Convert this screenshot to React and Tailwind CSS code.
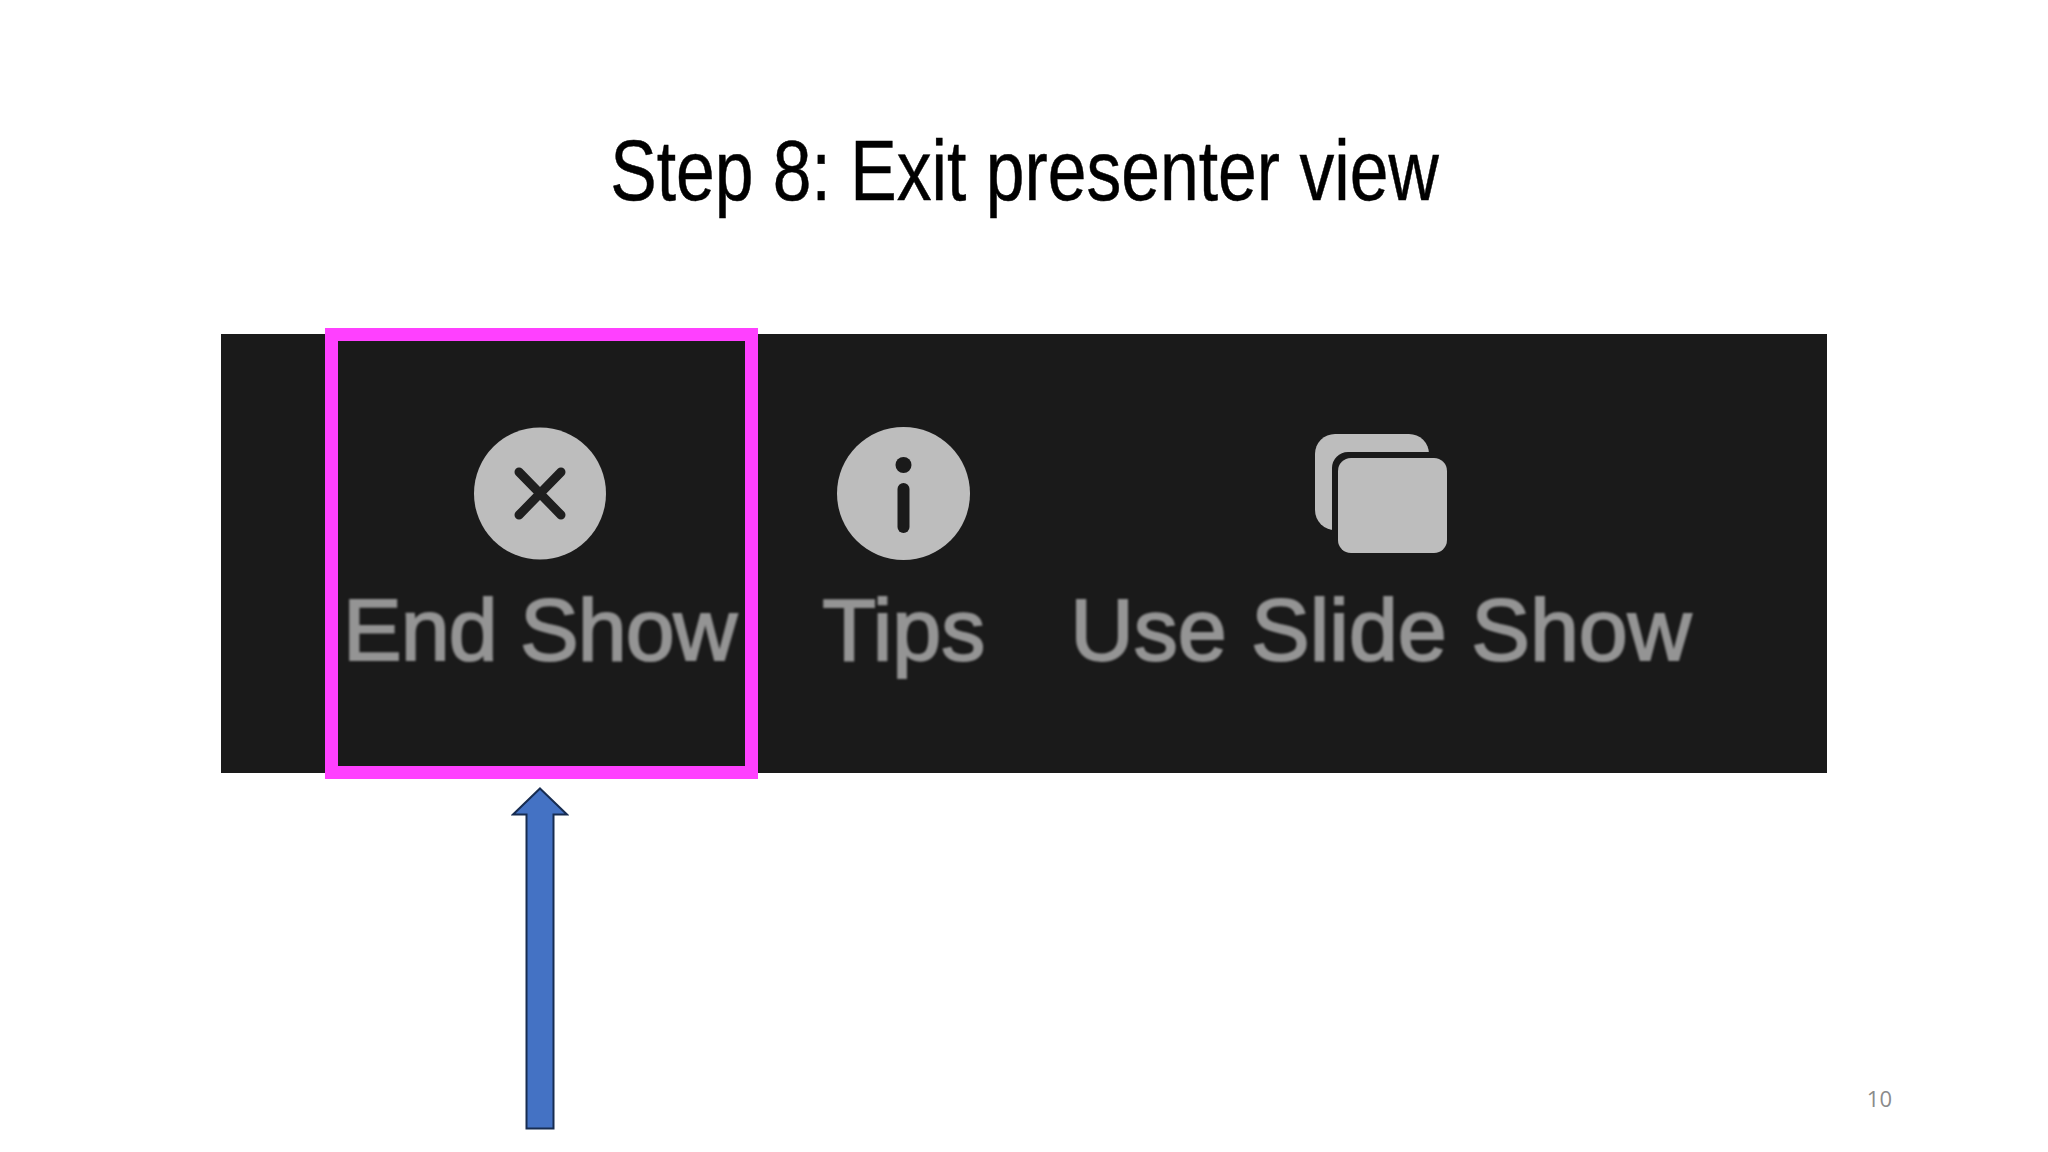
function CloseIcon() {
    return (
        <svg width="132" height="133" viewBox="0 0 132 133">
            <circle cx="66" cy="66.5" r="66" fill="#bdbdbd" />
            <path d="M45 45 L87 88 M87 45 L45 88" stroke="#1f1f1f" strokeWidth="9" strokeLinecap="round" />
        </svg>
    );
}

function InfoIcon() {
    return (
        <svg width="133" height="133" viewBox="0 0 133 133">
            <circle cx="66.5" cy="66.5" r="66.5" fill="#bdbdbd" />
            <circle cx="66.5" cy="38" r="8" fill="#1a1a1a" />
            <path d="M66.5 62 V100" stroke="#1a1a1a" strokeWidth="12" strokeLinecap="round" />
        </svg>
    );
}

function SlidesIcon() {
    return (
        <svg width="132" height="119" viewBox="0 0 132 119">
            <rect x="0" y="0" width="114" height="96" rx="20" fill="#bdbdbd" />
            <rect x="17" y="18" width="115" height="101" rx="16" fill="#1a1a1a" />
            <rect x="23" y="24" width="109" height="95" rx="13" fill="#bdbdbd" />
        </svg>
    );
}

function ToolbarItem({ icon, label, className }) {
    return (
        <div className="flex flex-col items-center">
            <div className="flex h-[133px] items-center justify-center">{icon}</div>
            <span className={`mt-[20px] text-[88px] leading-[100px] whitespace-nowrap text-[#949494] blur-[1px] [-webkit-text-stroke:2px_#949494] ${className}`}>
                {label}
            </span>
        </div>
    );
}

export default function App() {
    return (
        <div className="flex h-[1152px] w-[2048px] flex-col bg-white [font-family:'Liberation_Sans',Arial,sans-serif]">
            <h1 className="mt-[120px] h-[100px] text-center text-[86px] leading-[100px] font-normal text-black">
                <span className="inline-block scale-x-[.81] whitespace-nowrap [-webkit-text-stroke:0.5px_#000]">Step 8: Exit presenter view</span>
            </h1>

            {/* Toolbar screenshot */}
            <div className="relative mt-[114px] ml-[221px] flex h-[439px] w-[1606px] bg-[#1a1a1a] pt-[93px] pl-[122px]">
                <ToolbarItem icon={<CloseIcon />} label="End Show" className="tracking-[-1px]" />
                <div className="ml-[86px]">
                    <ToolbarItem icon={<InfoIcon />} label="Tips" className="" />
                </div>
                <div className="ml-[85px]">
                    <ToolbarItem icon={<SlidesIcon />} label="Use Slide Show" className="" />
                </div>
                {/* Highlight */}
                <div className="absolute top-[-6px] left-[104px] h-[451px] w-[433px] border-[13px] border-[#ff40ff]" />
            </div>

            <div className="flex items-start justify-between">
                <svg width="58" height="344" viewBox="0 0 58 344" className="mt-[14px] ml-[511px]">
                    <path
                        d="M29 1.5 L56 27.5 H42.5 V341.5 H15.5 V27.5 H2 Z"
                        fill="#4472c4"
                        stroke="#172c51"
                        strokeWidth="2"
                    />
                </svg>
                <span className="mt-[310px] mr-[156px] [font-family:'Open_Sans',sans-serif] text-[22px] leading-[30px] text-[#8b8b8b]">
                    10
                </span>
            </div>
        </div>
    );
}
